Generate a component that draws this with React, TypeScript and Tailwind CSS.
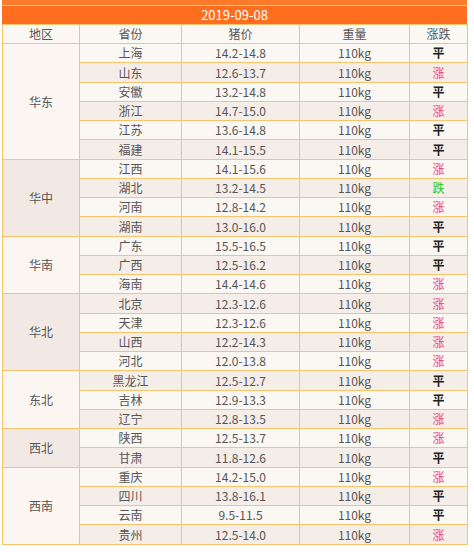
import React from "react";

type Row = { prov: string; price: string; trend: "平" | "涨" | "跌" };
type Group = { region: string; rows: Row[] };

const groups: Group[] = [
  {
    region: "华东",
    rows: [
      { prov: "上海", price: "14.2-14.8", trend: "平" },
      { prov: "山东", price: "12.6-13.7", trend: "涨" },
      { prov: "安徽", price: "13.2-14.8", trend: "平" },
      { prov: "浙江", price: "14.7-15.0", trend: "涨" },
      { prov: "江苏", price: "13.6-14.8", trend: "平" },
      { prov: "福建", price: "14.1-15.5", trend: "平" },
    ],
  },
  {
    region: "华中",
    rows: [
      { prov: "江西", price: "14.1-15.6", trend: "涨" },
      { prov: "湖北", price: "13.2-14.5", trend: "跌" },
      { prov: "河南", price: "12.8-14.2", trend: "涨" },
      { prov: "湖南", price: "13.0-16.0", trend: "平" },
    ],
  },
  {
    region: "华南",
    rows: [
      { prov: "广东", price: "15.5-16.5", trend: "平" },
      { prov: "广西", price: "12.5-16.2", trend: "平" },
      { prov: "海南", price: "14.4-14.6", trend: "涨" },
    ],
  },
  {
    region: "华北",
    rows: [
      { prov: "北京", price: "12.3-12.6", trend: "涨" },
      { prov: "天津", price: "12.3-12.6", trend: "涨" },
      { prov: "山西", price: "12.2-14.3", trend: "涨" },
      { prov: "河北", price: "12.0-13.8", trend: "涨" },
    ],
  },
  {
    region: "东北",
    rows: [
      { prov: "黑龙江", price: "12.5-12.7", trend: "平" },
      { prov: "吉林", price: "12.9-13.3", trend: "平" },
      { prov: "辽宁", price: "12.8-13.5", trend: "涨" },
    ],
  },
  {
    region: "西北",
    rows: [
      { prov: "陕西", price: "12.5-13.7", trend: "涨" },
      { prov: "甘肃", price: "11.8-12.6", trend: "平" },
    ],
  },
  {
    region: "西南",
    rows: [
      { prov: "重庆", price: "14.2-15.0", trend: "涨" },
      { prov: "四川", price: "13.8-16.1", trend: "平" },
      { prov: "云南", price: "9.5-11.5", trend: "平" },
      { prov: "贵州", price: "12.5-14.0", trend: "涨" },
    ],
  },
];

const font = "font-['Noto_Sans_CJK_SC',sans-serif]";
const cell = "border border-[#f6c46c] text-center align-middle p-0";

function Trend({ t }: { t: Row["trend"] }) {
  if (t === "平") return <span className="font-bold text-[#222]">平</span>;
  if (t === "涨") return <span className="text-[#ec4470]">涨</span>;
  return <span className="text-[#1fc41f]">跌</span>;
}

export default function App() {
  let idx = 0;
  return (
    <div className="w-[474px] h-[552px] bg-white">
      <div className={`ml-[2px] w-[465px] ${font}`}>
        <div className="h-[5px] bg-[#ff7b2c]" />
        <div className="h-px bg-[#ffc79c]" />
        <div className="h-[18px] bg-[#ff6e1e] text-white text-[13px] leading-[18px] text-center">
          2019-09-08
        </div>
        <table className="w-[465px] table-fixed border-collapse text-[12px] text-[#555]">
          <colgroup>
            <col className="w-[77px]" />
            <col className="w-[102px]" />
            <col className="w-[118px]" />
            <col className="w-[110px]" />
            <col className="w-[58px]" />
          </colgroup>
          <thead>
            <tr className="h-[19px] bg-[#fcf8f3]">
              <th className={`${cell} font-normal`}>地区</th>
              <th className={`${cell} font-normal`}>省份</th>
              <th className={`${cell} font-normal`}>猪价</th>
              <th className={`${cell} font-normal`}>重量</th>
              <th className={`${cell} font-normal`}>涨跌</th>
            </tr>
          </thead>
          <tbody>
            {groups.map((g, gi) =>
              g.rows.map((r, ri) => {
                const i = idx++;
                const tall = i % 4 === 1;
                const dark = i % 2 === 1;
                return (
                  <tr
                    key={r.prov}
                    className={`${tall ? "h-[20px]" : "h-[19px]"} ${dark ? "bg-[#f5ede8]" : "bg-[#fbf7f3]"}`}
                  >
                    {ri === 0 && (
                      <td
                        rowSpan={g.rows.length}
                        className={`${cell} ${gi % 2 === 1 ? "bg-[#f3e9e4]" : "bg-[#fbf6f1]"}`}
                      >
                        {g.region}
                      </td>
                    )}
                    <td className={cell}>{r.prov}</td>
                    <td className={cell}>{r.price}</td>
                    <td className={cell}>110kg</td>
                    <td className={cell}>
                      <Trend t={r.trend} />
                    </td>
                  </tr>
                );
              })
            )}
          </tbody>
        </table>
      </div>
    </div>
  );
}
